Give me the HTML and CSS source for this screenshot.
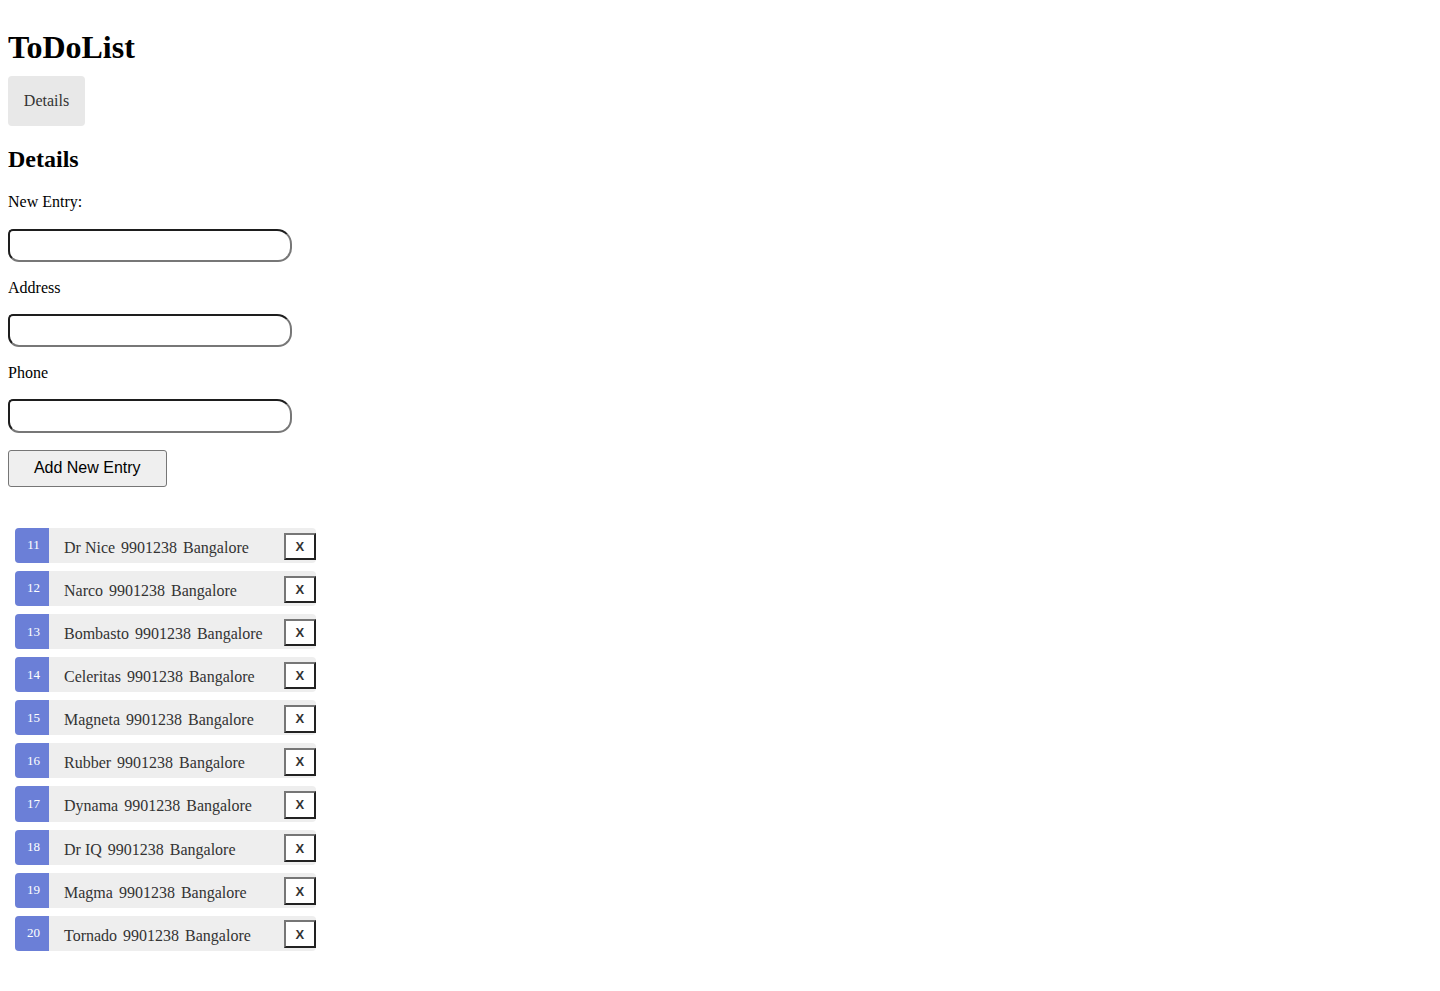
FILE: index.html
```html
<!DOCTYPE html>
<html lang="en">
<head>
<meta charset="utf-8">
<title>ToDoList</title>
<link rel="stylesheet" href="styles.css">
</head>
<body>
<h1 class="title">ToDoList</h1>
<nav class="nav"><a class="nav-link" href="#">Details</a></nav>
<h2 class="section-title">Details</h2>
<form class="entry-form">
  <label class="field-label">New Entry:</label>
  <input class="field-input" type="text">
  <label class="field-label">Address</label>
  <input class="field-input" type="text">
  <label class="field-label">Phone</label>
  <input class="field-input field-last" type="text">
  <button class="add-btn" type="button">Add New Entry</button>
</form>
<ul class="entries">
  <li class="entry"><span class="badge">11</span><span class="entry-text"><span class="f">Dr Nice</span> <span class="f">9901238</span> <span class="f">Bangalore</span></span><button class="delete" type="button">X</button></li>
  <li class="entry"><span class="badge">12</span><span class="entry-text"><span class="f">Narco</span> <span class="f">9901238</span> <span class="f">Bangalore</span></span><button class="delete" type="button">X</button></li>
  <li class="entry"><span class="badge">13</span><span class="entry-text"><span class="f">Bombasto</span> <span class="f">9901238</span> <span class="f">Bangalore</span></span><button class="delete" type="button">X</button></li>
  <li class="entry"><span class="badge">14</span><span class="entry-text"><span class="f">Celeritas</span> <span class="f">9901238</span> <span class="f">Bangalore</span></span><button class="delete" type="button">X</button></li>
  <li class="entry"><span class="badge">15</span><span class="entry-text"><span class="f">Magneta</span> <span class="f">9901238</span> <span class="f">Bangalore</span></span><button class="delete" type="button">X</button></li>
  <li class="entry"><span class="badge">16</span><span class="entry-text"><span class="f">Rubber</span> <span class="f">9901238</span> <span class="f">Bangalore</span></span><button class="delete" type="button">X</button></li>
  <li class="entry"><span class="badge">17</span><span class="entry-text"><span class="f">Dynama</span> <span class="f">9901238</span> <span class="f">Bangalore</span></span><button class="delete" type="button">X</button></li>
  <li class="entry"><span class="badge">18</span><span class="entry-text"><span class="f">Dr IQ</span> <span class="f">9901238</span> <span class="f">Bangalore</span></span><button class="delete" type="button">X</button></li>
  <li class="entry"><span class="badge">19</span><span class="entry-text"><span class="f">Magma</span> <span class="f">9901238</span> <span class="f">Bangalore</span></span><button class="delete" type="button">X</button></li>
  <li class="entry"><span class="badge">20</span><span class="entry-text"><span class="f">Tornado</span> <span class="f">9901238</span> <span class="f">Bangalore</span></span><button class="delete" type="button">X</button></li>
</ul>
</body>
</html>
```
FILE: styles.css
```css
body {
  margin: 8px;
  font-family: "Liberation Serif", "Times New Roman", serif;
  font-size: 16px;
  color: #000;
  background: #fff;
}

.title {
  font-size: 32px;
  font-weight: bold;
  margin: 21.44px 0 10px;
}

.nav {
  display: flex;
}

.nav-link {
  display: block;
  width: 77px;
  height: 50px;
  box-sizing: border-box;
  line-height: 50px;
  text-align: center;
  background: #e8e8e8;
  border-radius: 4px;
  color: #333;
  text-decoration: none;
  font-size: 16px;
}

.section-title {
  font-size: 24px;
  font-weight: bold;
  margin: 19.92px 0 19.92px;
}

.entry-form {
  display: flex;
  flex-direction: column;
  align-items: flex-start;
}

.field-label {
  display: block;
  line-height: 18.4px;
}

.field-input {
  display: block;
  width: 284px;
  height: 33.3px;
  box-sizing: border-box;
  margin: 17.2px 0 16.4px;
  padding: 0 8px;
  border: 2px solid;
  border-color: #1e1e1e #777 #777 #1e1e1e;
  border-radius: 5px 15px 14px 11px;
  background: #fff;
  font-size: 16px;
}

.field-input.field-last {
  margin-bottom: 0;
}

.add-btn {
  margin-top: 16.8px;
  width: 158.5px;
  height: 37.4px;
  box-sizing: border-box;
  padding: 0;
  background: #efefef;
  border: 1px solid #767676;
  border-radius: 3px;
  font-family: "Liberation Sans", Arial, sans-serif;
  font-size: 16px;
  color: #000;
}

.entries {
  list-style: none;
  padding: 0;
  margin: 41px 0 0 7px;
  width: 301px;
  display: flex;
  flex-direction: column;
  gap: 8px;
}

.entry {
  display: flex;
  align-items: flex-start;
  height: 35.1px;
  background: #eee;
  border-radius: 4px;
  color: #333;
}

.badge {
  flex: none;
  width: 34px;
  height: 100%;
  box-sizing: border-box;
  padding: 10.5px 0 0 3px;
  text-align: center;
  font-size: 13px;
  line-height: 13px;
  color: #fff;
  background: #6b7fd7;
  border-radius: 4px 0 0 4px;
}

.entry-text {
  margin-left: 15px;
  padding-top: 11px;
  line-height: 18.4px;
  white-space: nowrap;
}

.f + .f {
  margin-left: 2px;
}

.delete {
  margin-left: auto;
  margin-top: 4.7px;
  width: 32.3px;
  height: 27.6px;
  box-sizing: border-box;
  padding: 0;
  background: #fff;
  border: 2px solid;
  border-color: #767676 #222 #222 #767676;
  font-family: "Liberation Sans", Arial, sans-serif;
  font-size: 13px;
  font-weight: bold;
  color: #333;
}
```
